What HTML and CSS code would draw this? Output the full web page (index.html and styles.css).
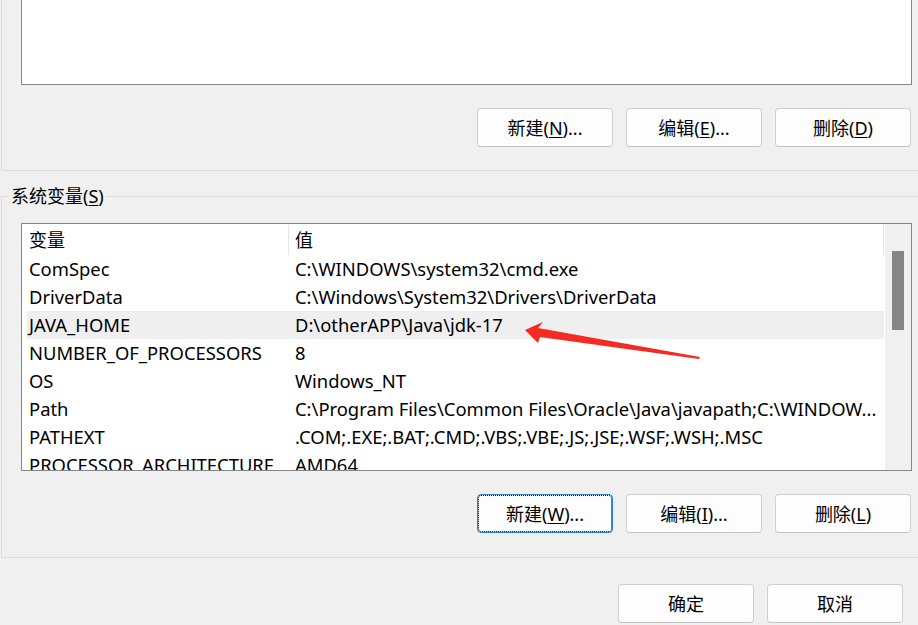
FILE: index.html
```html
<!DOCTYPE html>
<html lang="zh-CN">
<head>
<meta charset="utf-8">
<title>环境变量</title>
<link rel="stylesheet" href="styles.css">
</head>
<body>
<div class="window">
  <section class="group group-top">
    <div class="listbox listbox-top"></div>
    <div class="btnrow">
      <button class="btn">新建(<u>N</u>)...</button>
      <button class="btn">编辑(<u>E</u>)...</button>
      <button class="btn">删除(<u>D</u>)</button>
    </div>
  </section>

  <fieldset class="group group-sys">
    <legend class="group-label">系统变量(<u>S</u>)</legend>
    <div class="listbox listbox-sys">
      <div class="list-body">
        <div class="list-header">
          <div class="hcell hcell-name">变量</div>
          <div class="hcell hcell-value">值</div>
        </div>
        <div class="row"><span class="cell-name">ComSpec</span><span class="cell-value">C:\WINDOWS\system32\cmd.exe</span></div>
        <div class="row"><span class="cell-name">DriverData</span><span class="cell-value">C:\Windows\System32\Drivers\DriverData</span></div>
        <div class="row row-selected"><span class="cell-name">JAVA_HOME</span><span class="cell-value">D:\otherAPP\Java\jdk-17</span></div>
        <div class="row"><span class="cell-name">NUMBER_OF_PROCESSORS</span><span class="cell-value">8</span></div>
        <div class="row"><span class="cell-name">OS</span><span class="cell-value">Windows_NT</span></div>
        <div class="row"><span class="cell-name">Path</span><span class="cell-value">C:\Program Files\Common Files\Oracle\Java\javapath;C:\WINDOW...</span></div>
        <div class="row"><span class="cell-name">PATHEXT</span><span class="cell-value">.COM;.EXE;.BAT;.CMD;.VBS;.VBE;.JS;.JSE;.WSF;.WSH;.MSC</span></div>
        <div class="row"><span class="cell-name">PROCESSOR_ARCHITECTURE</span><span class="cell-value">AMD64</span></div>
      </div>
      <div class="scrollbar"><div class="thumb"></div></div>
    </div>
    <div class="btnrow">
      <button class="btn btn-focus">新建(<u>W</u>)...</button>
      <button class="btn">编辑(<u>I</u>)...</button>
      <button class="btn">删除(<u>L</u>)</button>
    </div>
  </fieldset>

  <div class="dialog-buttons">
    <button class="btn">确定</button>
    <button class="btn">取消</button>
  </div>

  <svg class="arrow" width="918" height="625" viewBox="0 0 918 625" aria-hidden="true">
    <polygon points="525,330 543,322 538,328 700,357 699,359 540,337 538,343" fill="#f52a22"/>
  </svg>
</div>
</body>
</html>
```

FILE: styles.css
```css
* { box-sizing: border-box; }

html, body {
  margin: 0;
  padding: 0;
  background: #f0f0f0;
}

body {
  width: 918px;
  height: 625px;
  overflow: hidden;
  font-family: "Noto Sans", "Noto Sans CJK SC", sans-serif;
  font-size: 18px;
  color: #000;
}

.window {
  position: relative;
  width: 918px;
  height: 625px;
  overflow: hidden;
}

.group {
  border: 1px solid #dcdcdc;
  width: 940px;
  margin-left: 1px;
}

.group-top {
  border-top: none;
  padding: 0 0 23px 0;
}

.listbox {
  margin-left: 19px;
  width: 891px;
  background: #fff;
  border: 1px solid #84868c;
}

.listbox-top {
  margin-top: -1px;
  height: 86px;
}

.btnrow {
  width: 891px;
  margin-left: 19px;
  margin-top: 23px;
  padding-right: 1px;
  display: flex;
  justify-content: flex-end;
  gap: 13px;
}

.btn {
  width: 136px;
  height: 39px;
  font: inherit;
  font-size: 18px;
  color: #000;
  background: #fdfdfd;
  border: 1px solid #d0d0d0;
  border-bottom-color: #c4c4c4;
  border-radius: 4px;
  padding: 0;
  line-height: 1;
}

.btn u {
  text-underline-offset: 2px;
}

.btn-focus {
  border-color: #2a7fd4;
  outline: 1px dotted #000;
  outline-offset: -2px;
}

.group-sys {
  margin-top: 13px;
  padding: 0 0 24px 0;
  min-width: 0;
}

.group-label {
  margin-left: 7px;
  padding: 0 2px;
  line-height: 24px;
}

.group-label u {
  text-underline-offset: 2px;
}

.listbox-sys {
  margin-top: 15px;
  height: 248px;
  display: flex;
}

.list-body {
  flex: 1;
  overflow: hidden;
  padding-left: 5px;
  white-space: nowrap;
}

.list-header {
  display: flex;
  height: 31px;
  align-items: center;
  border-right: 1px solid #e5e5e5;
}

.hcell {
  height: 30px;
  line-height: 30px;
  margin-top: 1px;
}

.hcell-name {
  width: 262px;
  padding-left: 2px;
  border-right: 1px solid #e5e5e5;
}

.hcell-value {
  padding-left: 6px;
}

.row {
  display: grid;
  grid-template-columns: 268px 1fr;
  height: 28px;
  line-height: 28px;
  font-size: 18.4px;
}

.row-selected {
  background: #efefef;
}

.cell-name {
  padding-left: 2px;
  overflow: hidden;
}

.cell-value {
  overflow: hidden;
}

.scrollbar {
  width: 26px;
  margin-left: 1px;
  background: #f0f0f0;
  padding: 27px 0 0 7px;
}

.thumb {
  width: 12px;
  height: 79px;
  background: #858585;
}

.dialog-buttons {
  display: flex;
  justify-content: flex-end;
  gap: 13px;
  margin-top: 26px;
  padding-right: 15px;
}

.arrow {
  position: absolute;
  left: 0;
  top: 0;
  pointer-events: none;
}
```
